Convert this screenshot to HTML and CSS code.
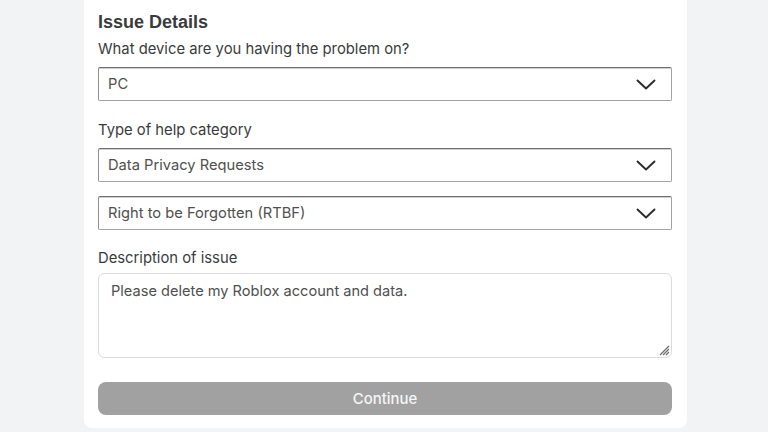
FILE: index.html
```html
<!DOCTYPE html>
<html lang="en">
<head>
<meta charset="utf-8">
<title>Issue Details</title>
<link rel="stylesheet" href="styles.css">
</head>
<body>
<main class="card">
  <h2 class="title">Issue Details</h2>
  <label class="label label-first">What device are you having the problem on?</label>
  <div class="select select-first">
    <span class="value">PC</span>
    <svg class="chev" width="20" height="11" viewBox="0 0 20 11"><path d="M1.5 1.5 L10 9.5 L18.5 1.5" fill="none" stroke="#2b2b2b" stroke-width="1.9" stroke-linecap="round" stroke-linejoin="round"/></svg>
  </div>
  <label class="label label-second">Type of help category</label>
  <div class="select select-second">
    <span class="value">Data Privacy Requests</span>
    <svg class="chev" width="20" height="11" viewBox="0 0 20 11"><path d="M1.5 1.5 L10 9.5 L18.5 1.5" fill="none" stroke="#2b2b2b" stroke-width="1.9" stroke-linecap="round" stroke-linejoin="round"/></svg>
  </div>
  <div class="select select-third">
    <span class="value">Right to be Forgotten (RTBF)</span>
    <svg class="chev" width="20" height="11" viewBox="0 0 20 11"><path d="M1.5 1.5 L10 9.5 L18.5 1.5" fill="none" stroke="#2b2b2b" stroke-width="1.9" stroke-linecap="round" stroke-linejoin="round"/></svg>
  </div>
  <label class="label label-third">Description of issue</label>
  <div class="textarea">
    <span class="textarea-text">Please delete my Roblox account and data.</span>
    <svg class="grip" width="12" height="12" viewBox="0 0 12 12"><path d="M11 2 L2 11 M11 5 L5 11 M11 8 L8 11" stroke="#6b6b6b" stroke-width="1.2" fill="none"/></svg>
  </div>
  <button class="btn" type="button">Continue</button>
</main>
</body>
</html>
```
FILE: styles.css
```css
* { box-sizing: border-box; }
html, body { margin: 0; padding: 0; }
body {
  background: #f2f3f5;
  font-family: Inter, "Noto Sans", "Liberation Sans", sans-serif;
  width: 768px;
  height: 432px;
  overflow: hidden;
}
.card {
  margin-left: 84px;
  width: 603px;
  background: #ffffff;
  border-radius: 0 0 8px 8px;
  padding: 10px 15px 13px 14px;
  display: flex;
  flex-direction: column;
}
.title {
  margin: 0;
  font-family: "Liberation Sans", Arial, sans-serif;
  font-size: 18px;
  line-height: 24px;
  font-weight: 700;
  color: #393b3d;
}
.label {
  font-size: 14.8px;
  line-height: 20px;
  color: #393b3d;
}
.label-first { margin-top: 5px; }
.label-second { margin-top: 19px; }
.label-third { margin-top: 18px; }
.select {
  height: 34px;
  border: 1px solid #a3a3a3;
  border-top-color: #6e6e6e;
  border-left-color: #8e8e8e;
  border-radius: 2px;
  display: flex;
  align-items: center;
  justify-content: space-between;
  padding: 0 15px 0 9px;
  box-shadow: inset 0 1px 0 #d0d0d0;
}
.select-first { margin-top: 8px; }
.select-second { margin-top: 8px; }
.select-third { margin-top: 14px; }
.value {
  font-size: 14.7px;
  color: #505050;
}
.chev { display: block; }
.textarea {
  margin-top: 5px;
  height: 85px;
  border: 1px solid #dcdcdc;
  border-radius: 6px;
  padding: 6px 12px;
  position: relative;
}
.textarea-text {
  font-size: 14.6px;
  line-height: 20px;
  color: #4f4f4f;
}
.grip {
  position: absolute;
  right: 1px;
  bottom: 1px;
}
.btn {
  margin-top: 24px;
  height: 33px;
  border: none;
  border-radius: 8px;
  background: #a1a1a2;
  color: #f6f6f6;
  font-family: inherit;
  font-size: 14.9px;
  font-weight: 500;
  cursor: default;
}
```
